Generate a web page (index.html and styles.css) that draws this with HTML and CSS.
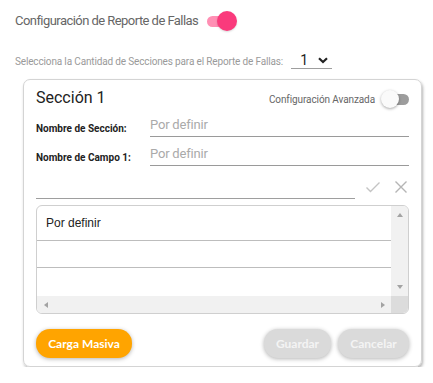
FILE: index.html
```html
<!DOCTYPE html>
<html lang="es">
<head>
<meta charset="utf-8">
<link rel="stylesheet" href="styles.css">
</head>
<body>
<div class="page">
  <div class="top-row">
    <span class="top-title">Configuración de Reporte de Fallas</span>
    <span class="toggle on"><span class="track"></span><span class="knob"></span></span>
  </div>
  <div class="select-row">
    <span class="select-label">Selecciona la Cantidad de Secciones para el Reporte de Fallas:</span>
    <span class="select">
      <span class="select-value">1</span>
      <svg class="chev" width="10" height="7" viewBox="0 0 10 7"><path d="M1 1.2 L5 5 L9 1.2" fill="none" stroke="#222" stroke-width="2.2"/></svg>
    </span>
  </div>
  <div class="card">
    <div class="card-head">
      <span class="card-title">Sección 1</span>
      <span class="adv">
        <span class="adv-label">Configuración Avanzada</span>
        <span class="toggle off"><span class="track"></span><span class="knob"></span></span>
      </span>
    </div>
    <div class="field">
      <span class="field-label">Nombre de Sección:</span>
      <span class="field-input">Por definir</span>
    </div>
    <div class="field">
      <span class="field-label">Nombre de Campo 1:</span>
      <span class="field-input">Por definir</span>
    </div>
    <div class="add-row">
      <span class="add-input"></span>
      <svg class="ico" width="16" height="14" viewBox="0 0 16 14"><path d="M1.5 7.5 L5.5 11.5 L14.5 2.5" fill="none" stroke="#c4c4c4" stroke-width="1.4"/></svg>
      <svg class="ico" width="14" height="14" viewBox="0 0 14 14"><path d="M1.5 1.5 L12.5 12.5 M12.5 1.5 L1.5 12.5" fill="none" stroke="#b5b5b5" stroke-width="1.4"/></svg>
    </div>
    <div class="grid">
      <div class="grid-main">
        <div class="grid-body">
          <div class="grid-row first">Por definir</div>
          <div class="grid-row"></div>
          <div class="grid-row last"></div>
        </div>
        <div class="vscroll">
          <span class="arr up"></span>
          <span class="arr down"></span>
        </div>
      </div>
      <div class="hscroll-row">
        <div class="hscroll">
          <span class="arr left"></span>
          <span class="arr right"></span>
        </div>
        <div class="corner"></div>
      </div>
    </div>
    <div class="actions">
      <button class="btn primary">Carga Masiva</button>
      <span class="spacer"></span>
      <button class="btn disabled">Guardar</button>
      <button class="btn disabled">Cancelar</button>
    </div>
  </div>
</div>
</body>
</html>
```
FILE: styles.css
```css
* { box-sizing: border-box; }
html, body { margin: 0; padding: 0; background: #fff; }
body { font-family: Roboto, "Liberation Sans", sans-serif; }

.page { padding: 10px 11px 0 15px; width: 433px; }

.top-row { display: flex; align-items: center; height: 21px; }
.top-title { font-size: 13px; color: #666; letter-spacing: -0.55px; }

.toggle { position: relative; display: inline-block; }
.toggle.on { width: 30px; height: 20px; margin-left: 9px; }
.toggle.on .track { position: absolute; left: 0; top: 5px; width: 24px; height: 11px; border-radius: 6px; background: #ff8fb4; }
.toggle.on .knob { position: absolute; left: 10px; top: 0; width: 20px; height: 20px; border-radius: 50%; background: #fa3a7c; box-shadow: 0 1px 2px rgba(0,0,0,0.15); }

.toggle.off { width: 28px; height: 18px; margin-left: 6px; }
.toggle.off .track { position: absolute; left: 4px; top: 4px; width: 24px; height: 11px; border-radius: 6px; background: #9d9d9d; }
.toggle.off .knob { position: absolute; left: 0; top: 0; width: 18px; height: 18px; border-radius: 50%; background: #fafafa; box-shadow: 0 1px 3px rgba(0,0,0,0.35); }

.select-row { display: flex; align-items: flex-end; margin-top: 21px; height: 17px; }
.select-label { font-size: 10px; color: #9a9a9a; letter-spacing: -0.15px; padding-bottom: 2px; }
.select { display: flex; align-items: center; margin-left: 8px; width: 41px; height: 17px; border-bottom: 1px solid #9e9e9e; padding-left: 9px; }
.select-value { font-size: 14px; color: #222; line-height: 14px; }
.chev { margin-left: 10px; margin-top: 1px; }

.card {
  margin-top: 10px; margin-left: 8px;
  width: 399px; height: 288px;
  border: 1px solid #d4d4d4; border-radius: 7px;
  box-shadow: 1px 2px 3px rgba(0,0,0,0.3);
  padding: 6px 12px 0 12px;
  display: flex; flex-direction: column;
}
.card-head { display: flex; align-items: center; justify-content: space-between; height: 22px; }
.card-title { font-size: 16px; color: #222; }
.adv { display: flex; align-items: center; margin-top: 4px; }
.adv-label { font-size: 10px; color: #666; letter-spacing: -0.1px; }

.field { display: flex; align-items: flex-end; height: 24px; margin-top: 5px; }
.field:first-of-type { margin-top: 6px; }
.field-label { width: 114px; font-size: 10px; font-weight: bold; color: #222; padding-bottom: 3px; }
.field-input { flex: 1; font-size: 13px; color: #aaa; border-bottom: 1px solid #9a9a9a; height: 22px; line-height: 16px; padding-top: 2px; letter-spacing: -0.2px; }

.add-row { display: flex; align-items: center; margin-top: 11px; height: 22px; }
.add-input { width: 319px; height: 22px; border-bottom: 1px solid #9e9e9e; }
.ico { margin-left: 10px; margin-bottom: 3px; }
.ico + .ico { margin-left: 13px; }

.grid {
  margin-top: 6px; width: 373px; height: 109px;
  border: 1px solid #cfcfcf; border-radius: 6px; overflow: hidden;
  display: flex; flex-direction: column;
}
.grid-main { flex: 1; display: flex; }
.grid-body { flex: 1; display: flex; flex-direction: column; }
.grid-row { border-bottom: 1px solid #bdbdbd; font-family: "Liberation Sans", Arial, sans-serif; font-size: 12px; color: #222; padding-left: 9px; }
.grid-row.first { height: 35px; line-height: 34px; }
.grid-row { height: 27px; }
.grid-row.last { border-bottom: none; flex: 1; }
.vscroll { width: 17px; background: #f1f1f1; display: flex; flex-direction: column; justify-content: space-between; align-items: center; padding: 7px 0 7px; }
.hscroll-row { display: flex; height: 17px; }
.hscroll { flex: 1; background: #f1f1f1; display: flex; justify-content: space-between; align-items: center; padding: 0 6px 0 7px; }
.corner { width: 17px; background: #dcdcdc; }
.arr { width: 0; height: 0; border: 3.5px solid transparent; }
.arr.up { border-bottom: 4px solid #a3a3a3; border-top-width: 0; }
.arr.down { border-top: 4px solid #a3a3a3; border-bottom-width: 0; }
.arr.left { border-right: 4px solid #a3a3a3; border-left-width: 0; }
.arr.right { border-left: 4px solid #a3a3a3; border-right-width: 0; }

.actions { display: flex; align-items: center; margin-top: 15px; }
.spacer { flex: 1; }
.btn {
  font-family: Lato, "Open Sans", sans-serif; font-weight: bold; font-size: 12px;
  border: none; height: 29px; border-radius: 14px; padding: 0;
  box-shadow: 0 1px 4px rgba(0,0,0,0.3);
}
.btn.primary { width: 96px; background: #ffa400; color: #fff; }
.btn.disabled { background: #dadada; color: #f4f4f4; }
.btn.disabled:nth-of-type(2) { width: 67px; }
.btn.disabled:nth-of-type(3) { width: 71px; margin-left: 7px; }
```
